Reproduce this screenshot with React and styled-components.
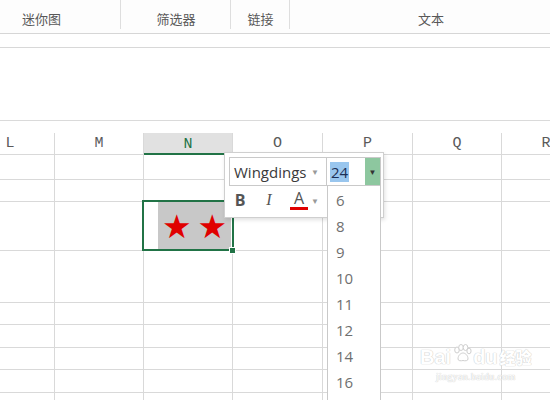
import React from "react";
import styled, { createGlobalStyle } from "styled-components";

const GlobalStyle = createGlobalStyle`
  html, body {
    margin: 0;
    padding: 0;
    background: #ffffff;
  }
  body {
    width: 550px;
    height: 400px;
    overflow: hidden;
    font-family: "Open Sans", "Noto Sans", sans-serif;
  }
`;

const Page = styled.div`
  position: relative;
  width: 550px;
  height: 400px;
  overflow: hidden;
  background: #ffffff;
`;

const Ribbon = styled.div`
  display: flex;
  height: 33px;
  background: #fdfdfd;
  border-bottom: 1px solid #d6d6d6;
`;

const Group = styled.div`
  width: ${(p) => (p.$w ? `${p.$w}px` : "auto")};
  flex: ${(p) => (p.$w ? "none" : "1")};
  display: flex;
  align-items: flex-end;
  justify-content: ${(p) => (p.$pad != null ? "flex-start" : "center")};
  padding-left: ${(p) => p.$pad || 0}px;
  padding-bottom: 6px;
  box-sizing: border-box;
  position: relative;
  font-family: "Noto Sans CJK SC", "Noto Sans", sans-serif;
  font-size: 13px;
  line-height: 16px;
  color: #585858;

  &::after {
    content: "";
    display: ${(p) => (p.$sep ? "block" : "none")};
    position: absolute;
    right: 0;
    top: 0;
    height: 29px;
    width: 1px;
    background: #dedede;
  }
`;

const Strip = styled.div`
  height: 13px;
  border-bottom: 1px solid #d8d8d8;
`;

const Blank = styled.div`
  height: 72px;
  border-bottom: 1px solid #dadada;
`;

const Sheet = styled.div`
  margin-left: -34px;
  padding-top: 12px;
`;

const Row = styled.div`
  display: grid;
  grid-template-columns: 89px 89px 89px 90px 90px 89px 89px;
  height: ${(p) => p.$h}px;
  border-bottom: 1px solid #d9d9d9;
`;

const HeadCell = styled.div`
  display: flex;
  align-items: center;
  justify-content: center;
  border-right: 1px solid #d9d9d9;
  font-family: "Liberation Mono", "DejaVu Sans Mono", monospace;
  font-size: 15px;
  color: ${(p) => (p.$active ? "#217346" : "#5a5a5a")};
  background: ${(p) => (p.$active ? "#e1e1e1" : "transparent")};
  box-shadow: ${(p) => (p.$active ? "inset 0 -2px 0 #217346" : "none")};
  margin-bottom: ${(p) => (p.$active ? "-1px" : "0")};
`;

const Cell = styled.div`
  border-right: 1px solid #d9d9d9;
`;

const SelectedCell = styled.div`
  position: relative;
  display: flex;
  justify-content: flex-end;
  border-right: 1px solid #d9d9d9;

  &::after {
    content: "";
    position: absolute;
    left: -2px;
    top: -2px;
    right: -2px;
    bottom: -1px;
    border: 2px solid #217346;
    pointer-events: none;
  }
`;

const Handle = styled.span`
  position: absolute;
  right: -4px;
  bottom: -4px;
  width: 5px;
  height: 5px;
  background: #217346;
  border: 1px solid #fff;
  z-index: 2;
`;

const Selection = styled.span`
  display: flex;
  align-items: center;
  justify-content: center;
  width: 73px;
  margin-right: 1px;
  background: #c8c8c8;
  font-family: "DejaVu Sans", sans-serif;
  font-size: 33px;
  letter-spacing: 6px;
  padding-left: 6px;
  box-sizing: border-box;
  color: #e00000;
`;

const MiniBar = styled.div`
  position: absolute;
  left: 224px;
  top: 152px;
  width: 160px;
  height: 66px;
  box-sizing: border-box;
  background: #fff;
  border: 1px solid #cfcfcf;
  box-shadow: 1px 2px 4px rgba(0, 0, 0, 0.12);
  padding: 4px 0 0 4px;
  display: flex;
  flex-direction: column;
  gap: 2px;
  z-index: 3;
`;

const BarRow = styled.div`
  display: flex;
  align-items: center;
`;

const FontBox = styled.div`
  width: 98px;
  height: 29px;
  box-sizing: border-box;
  border: 1px solid #c9c9c9;
  display: flex;
  align-items: center;
  justify-content: space-between;
  padding: 0 7px 0 4px;
  font-size: 15px;
  color: #3a3a3a;
`;

const Caret = styled.span`
  font-size: 8px;
  color: ${(p) => p.$c || "#999"};
`;

const SizeBox = styled.div`
  width: 54px;
  height: 29px;
  box-sizing: border-box;
  border: 1px solid #c9c9c9;
  border-left: none;
  display: flex;
  align-items: stretch;
`;

const SizeValue = styled.div`
  flex: 1;
  display: flex;
  align-items: center;
  padding-left: 3px;

  span {
    background: #99c6ee;
    color: #1c2f55;
    font-size: 15px;
    line-height: 20px;
    padding: 0 1px;
  }
`;

const SizeArrow = styled.div`
  width: 15px;
  background: #8dc79f;
  display: flex;
  align-items: center;
  justify-content: center;
`;

const FmtButton = styled.span`
  width: ${(p) => p.$w}px;
  display: flex;
  justify-content: center;
  align-items: center;
  font-family: ${(p) => (p.$serif ? '"Liberation Serif", serif' : '"Open Sans", sans-serif')};
  font-size: 16px;
  font-weight: ${(p) => (p.$bold ? 700 : 400)};
  font-style: ${(p) => (p.$italic ? "italic" : "normal")};
  color: #555;
  height: 24px;
`;

const ColorA = styled.span`
  display: flex;
  flex-direction: column;
  align-items: center;
  font-size: 16px;
  line-height: 16px;
  color: #555;

  &::after {
    content: "";
    width: 18px;
    height: 3px;
    background: #e00000;
    margin-top: 1px;
  }
`;

const SizeList = styled.ul`
  position: absolute;
  left: 327px;
  top: 185px;
  width: 54px;
  height: 230px;
  box-sizing: border-box;
  margin: 0;
  padding: 1px 0 0 0;
  list-style: none;
  background: #fff;
  border: 1px solid #c9c9c9;
  z-index: 4;
`;

const SizeItem = styled.li`
  height: 26px;
  line-height: 26px;
  padding-left: 8px;
  font-size: 15px;
  color: #6f6f6f;
`;

const Watermark = styled.div`
  position: absolute;
  left: 420px;
  top: 344px;
  display: flex;
  flex-direction: column;
  align-items: center;
  color: #ffffff;
  text-shadow: 0 0 1px #c9c9c9, 0 0 1px #c9c9c9;
  z-index: 1;
`;

const MarkTop = styled.div`
  display: flex;
  align-items: flex-end;
  font-family: "Liberation Sans", sans-serif;
  font-size: 20px;
  font-weight: 700;
  line-height: 22px;

  b {
    font-family: "Noto Sans CJK SC", sans-serif;
    font-size: 16px;
    margin-left: 2px;
  }
`;

const MarkBottom = styled.div`
  font-family: "Liberation Serif", serif;
  font-size: 10px;
  margin-top: 3px;
  letter-spacing: 0.3px;
`;

const columns = ["L", "M", "N", "O", "P", "Q", "R"];
const rowHeights = [24, 21, 48, 51, 21, 22, 21, 22, 22];
const sizes = ["6", "8", "9", "10", "11", "12", "14", "16"];

function Paw() {
  return (
    <svg width="20" height="18" viewBox="0 0 20 18" style={{ margin: "0 1px 6px" }}>
      <g fill="#fff" stroke="#cfcfcf" strokeWidth="1">
        <ellipse cx="5" cy="6" rx="2.3" ry="3" />
        <ellipse cx="9" cy="3.5" rx="2.3" ry="3" />
        <ellipse cx="13.5" cy="3.5" rx="2.3" ry="3" />
        <ellipse cx="17" cy="7" rx="2.1" ry="2.8" />
        <path d="M6 15c0-4 3-6 5-6s5 2 5 6c0 2-3 2-5 1.5C9 17 6 17 6 15z" />
      </g>
    </svg>
  );
}

export default function App() {
  return (
    <Page>
      <GlobalStyle />
      <Ribbon>
        <Group $w={121} $pad={22} $sep>迷你图</Group>
        <Group $w={110} $sep>筛选器</Group>
        <Group $w={59} $sep>链接</Group>
        <Group $pad={128}>文本</Group>
      </Ribbon>
      <Strip />
      <Blank />
      <Sheet>
        <Row $h={21}>
          {columns.map((c) => (
            <HeadCell key={c} $active={c === "N"}>{c}</HeadCell>
          ))}
        </Row>
        {rowHeights.map((h, r) => (
          <Row key={r} $h={h}>
            {columns.map((c) =>
              r === 2 && c === "N" ? (
                <SelectedCell key={c}>
                  <Selection>★★</Selection>
                  <Handle />
                </SelectedCell>
              ) : (
                <Cell key={c} />
              )
            )}
          </Row>
        ))}
      </Sheet>

      <MiniBar>
        <BarRow>
          <FontBox>
            Wingdings <Caret>▼</Caret>
          </FontBox>
          <SizeBox>
            <SizeValue><span>24</span></SizeValue>
            <SizeArrow><Caret $c="#333">▼</Caret></SizeArrow>
          </SizeBox>
        </BarRow>
        <BarRow>
          <FmtButton $w={22} $bold>B</FmtButton>
          <FmtButton $w={36} $italic $serif>I</FmtButton>
          <FmtButton $w={24}><ColorA>A</ColorA></FmtButton>
          <Caret>▼</Caret>
        </BarRow>
      </MiniBar>

      <SizeList>
        {sizes.map((s) => (
          <SizeItem key={s}>{s}</SizeItem>
        ))}
      </SizeList>

      <Watermark>
        <MarkTop>
          Bai<Paw />du<b>经验</b>
        </MarkTop>
        <MarkBottom>jingyan.baidu.com</MarkBottom>
      </Watermark>
    </Page>
  );
}
